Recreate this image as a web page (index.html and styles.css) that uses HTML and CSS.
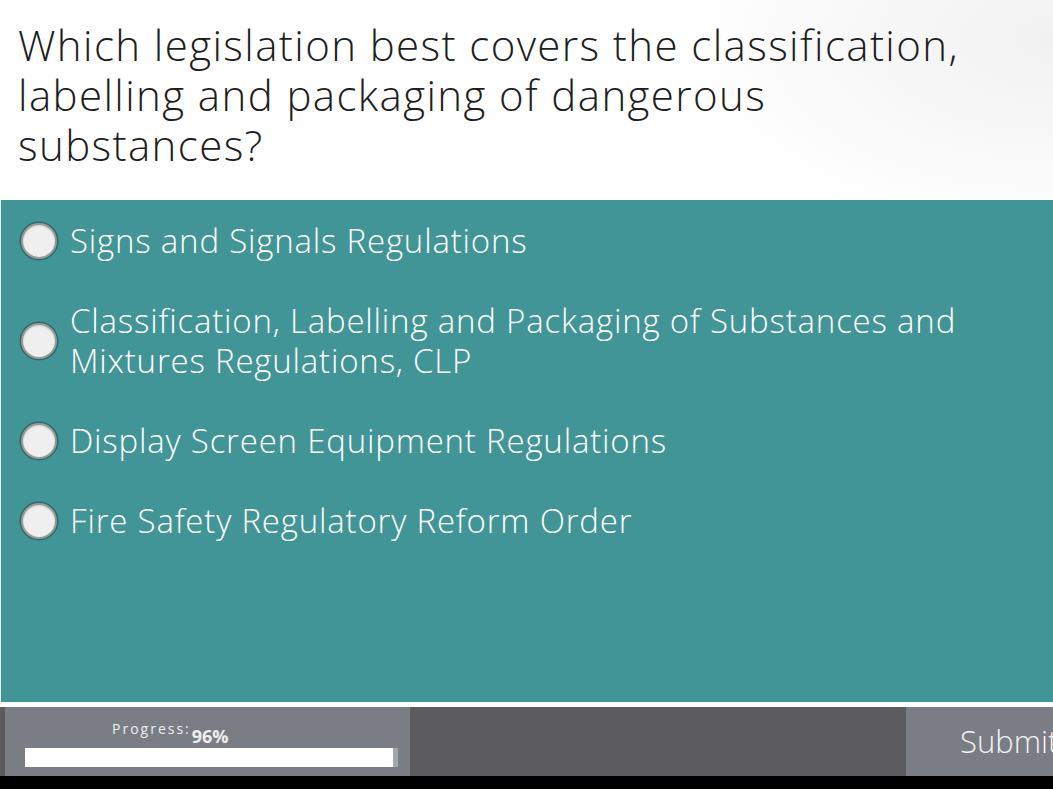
FILE: index.html
```html
<!DOCTYPE html>
<html lang="en">
<head>
<meta charset="utf-8">
<title>Quiz question</title>
<link rel="stylesheet" href="styles.css">
</head>
<body>
<div class="slide">
  <header class="question">
    <h1>Which legislation best covers the classification, labelling and packaging of dangerous substances?</h1>
  </header>
  <main class="answers">
    <label class="option"><span class="radio"></span><span class="text">Signs and Signals Regulations</span></label>
    <label class="option"><span class="radio"></span><span class="text">Classification, Labelling and Packaging of Substances and Mixtures Regulations, CLP</span></label>
    <label class="option"><span class="radio"></span><span class="text">Display Screen Equipment Regulations</span></label>
    <label class="option"><span class="radio"></span><span class="text">Fire Safety Regulatory Reform Order</span></label>
  </main>
  <div class="divider"></div>
  <footer class="toolbar">
    <div class="edge"></div>
    <div class="progress">
      <div class="progress-label"><span class="word">Progress:</span><span class="pct">96%</span></div>
      <div class="track"><div class="fill" style="width:98.6%"></div></div>
    </div>
    <div class="spacer"></div>
    <div class="submit">Submit</div>
  </footer>
  <div class="bottom"></div>
</div>
</body>
</html>
```
FILE: styles.css
```css
html, body {
  margin: 0;
  padding: 0;
  background: #000;
  overflow: hidden;
}

.slide {
  width: 1053px;
  height: 789px;
  display: flex;
  flex-direction: column;
  font-family: "Open Sans", "Noto Sans", sans-serif;
}

.question {
  height: 200px;
  box-sizing: border-box;
  padding: 20px 0 0 18px;
  background:
    radial-gradient(ellipse 380px 200px at 1053px 40px, #f1f1f1 0%, rgba(255,255,255,0) 100%),
    #fff;
}

.question h1 {
  margin: 0;
  width: 990px;
  font-size: 42px;
  font-weight: 300;
  line-height: 50px;
  color: #1e1e1e;
  letter-spacing: 1.4px;
}

.answers {
  height: 502px;
  box-sizing: border-box;
  background: #429596;
  border-left: 1px solid #e8f0f0;
  padding: 21px 0 0 20px;
  display: flex;
  flex-direction: column;
  gap: 40px;
}

.option {
  display: flex;
  align-items: center;
  gap: 13px;
  color: #fff;
  font-size: 33px;
  font-weight: 300;
  line-height: 40px;
  letter-spacing: 0.8px;
}

.option .text {
  width: 940px;
}

.radio {
  flex: none;
  width: 36px;
  height: 36px;
  border-radius: 50%;
  background: #efeff0;
  border: 2px solid #9a9a9a;
  box-shadow: 0 0 0 1.5px #2f6a6b, inset 0 1px 2px rgba(0,0,0,0.15);
  box-sizing: border-box;
}

.divider {
  height: 5px;
  background: #fff;
}

.toolbar {
  height: 69px;
  display: flex;
  background: #5c5c5e;
}

.edge {
  width: 5px;
  background: #5c5c5e;
}

.progress {
  width: 405px;
  background: #7b7d85;
  box-sizing: border-box;
  padding: 12px 0 0 20px;
}

.progress-label {
  color: #eeeeee;
  margin-left: 87px;
  height: 29px;
  display: flex;
  align-items: flex-start;
}

.progress-label .word {
  font-size: 14px;
  letter-spacing: 2px;
  line-height: 20px;
}

.progress-label .pct {
  font-size: 18px;
  font-weight: 700;
  line-height: 20px;
  margin-top: 7px;
  margin-left: 1px;
}

.track {
  width: 373px;
  height: 19px;
  background: #a5a6ab;
}

.fill {
  height: 100%;
  background: #fff;
}

.spacer {
  width: 496px;
  background: #5c5c5e;
}

.submit {
  flex: 1;
  background: #7b7d85;
  color: #f2f2f2;
  font-size: 31px;
  font-weight: 300;
  padding-left: 54px;
  line-height: 69px;
  white-space: nowrap;
  overflow: hidden;
}

.bottom {
  height: 13px;
  background: #000;
}
```
